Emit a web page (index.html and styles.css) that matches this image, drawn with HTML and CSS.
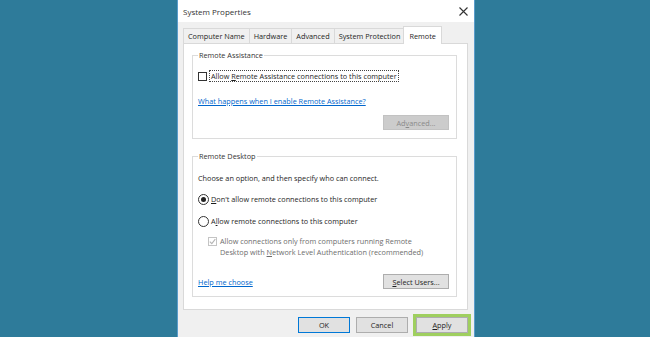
FILE: index.html
```html
<!DOCTYPE html>
<html>
<head>
    <title>System Properties</title>
    <link rel="stylesheet" href="styles.css">
</head>
<body>
    <div class="dialog">
        <div class="titlebar">
            <span class="title">System Properties</span>
            <svg class="close" width="9" height="9" viewBox="0 0 9 9">
                <path d="M0.5 0.5 L8.5 8.5 M8.5 0.5 L0.5 8.5" stroke="#333" stroke-width="1.1" fill="none"/>
            </svg>
        </div>

        <div class="content">
            <!-- Tab strip -->
            <div class="tabs">
                <div class="tab">Computer Name</div>
                <div class="tab">Hardware</div>
                <div class="tab">Advanced</div>
                <div class="tab">System Protection</div>
                <div class="tab active">Remote</div>
            </div>

            <div class="panel">
                <fieldset class="group group-assist">
                    <legend>Remote Assistance</legend>
                    <div class="check-row">
                        <span class="checkbox"></span>
                        <span class="focus">Allow <u>R</u>emote Assistance connections to this computer</span>
                    </div>
                    <a class="link link-assist" href="#">What happens when I enable Remote Assistance?</a>
                    <div class="btn-row">
                        <button class="btn disabled">Ad<u>v</u>anced...</button>
                    </div>
                </fieldset>

                <fieldset class="group group-desktop">
                    <legend>Remote Desktop</legend>
                    <p class="intro">Choose an option, and then specify who can connect.</p>
                    <div class="radio-row first">
                        <span class="radio checked"></span>
                        <span><u>D</u>on't allow remote connections to this computer</span>
                    </div>
                    <div class="radio-row">
                        <span class="radio"></span>
                        <span>A<u>l</u>low remote connections to this computer</span>
                    </div>
                    <div class="nla-row">
                        <span class="checkbox disabled">
                            <svg width="7" height="7" viewBox="0 0 7 7">
                                <path d="M0.8 3.6 L2.8 5.6 L6.3 1.2" stroke="#b5b5b5" stroke-width="1.1" fill="none"/>
                            </svg>
                        </span>
                        <span class="nla-text">Allow connections only from computers running Remote<br>Desktop with <u>N</u>etwork Level Authentication (recommended)</span>
                    </div>
                    <div class="bottom-row">
                        <a class="link" href="#">Help me choose</a>
                        <button class="btn"><u>S</u>elect Users...</button>
                    </div>
                </fieldset>
            </div>

            <div class="actions">
                <button class="btn default">OK</button>
                <button class="btn cancel">Cancel</button>
                <button class="btn apply"><u>A</u>pply</button>
            </div>
        </div>
    </div>
</body>
</html>
```

FILE: styles.css
```css
/* Reset */
* {
    margin: 0;
    padding: 0;
    box-sizing: border-box;
}

body {
    background-color: #2e7b9a;
    font-family: "Open Sans", sans-serif;
    font-size: 7.3px;
    color: #1e1e1e;
    height: 337px;
    overflow: hidden;
}

/* Window */
.dialog {
    width: 298px;
    height: 350px;
    margin-left: 177px;
    background-color: #f0f0f0;
    border-left: 1px solid #5a9ccb;
    border-right: 1px solid #5a9ccb;
}

.titlebar {
    height: 22px;
    background-color: #fff;
    display: flex;
    align-items: center;
    justify-content: space-between;
    padding: 0 6px 0 5px;
}

.title {
    font-size: 8px;
    color: #333;
}

.content {
    padding: 4px 6px 0 5px;
}

/* Tabs */
.tabs {
    display: flex;
    align-items: flex-end;
    height: 17px;
}

.tab {
    height: 15px;
    padding: 0 4px;
    display: flex;
    align-items: center;
    background-color: #f0f0f0;
    border: 1px solid #d9d9d9;
    border-bottom: none;
    margin-right: -1px;
}

.tab.active {
    height: 18px;
    background-color: #fff;
    margin-bottom: -1px;
    margin-left: -1px;
    position: relative;
    z-index: 1;
    padding: 0 5px;
}

/* Tab page */
.panel {
    height: 267px;
    background-color: #fff;
    border: 1px solid #d9d9d9;
    padding: 5px 10px 0 8px;
}

.group {
    border: 1px solid #dcdcdc;
    padding: 0 7px 0 5px;
}

.group legend {
    padding: 0 1px;
    line-height: 12px;
    color: #333;
}

.group-assist {
    padding-bottom: 8px;
}

.group-desktop {
    margin-top: 11px;
    padding-bottom: 7px;
}

.check-row {
    display: flex;
    align-items: center;
    height: 12px;
    margin-top: 9px;
}

.checkbox {
    width: 9px;
    height: 9px;
    border: 1px solid #333;
    background-color: #fff;
    margin-right: 2px;
    display: flex;
    align-items: center;
    justify-content: center;
}

.checkbox.disabled {
    border-color: #c4c4c4;
    margin-right: 3px;
}

.focus {
    border: 1px dotted #444;
    padding: 0 1px;
    line-height: 10px;
}

.link {
    color: #0066cc;
    text-decoration: underline;
}

.link-assist {
    display: block;
    line-height: 12px;
    margin-top: 13px;
}

.btn-row {
    display: flex;
    justify-content: flex-end;
    margin-top: 8px;
}

/* Buttons */
.btn {
    font-family: inherit;
    font-size: inherit;
    color: #1e1e1e;
    height: 15px;
    width: 66px;
    background-color: #e1e1e1;
    border: 1px solid #adadad;
}

.btn.disabled {
    background-color: #cccccc;
    border-color: #c2c2c2;
    color: #8a8a8a;
}

.intro {
    line-height: 12px;
    margin-top: 10px;
}

.radio-row {
    display: flex;
    align-items: center;
    height: 12px;
    margin-top: 10px;
}

.radio-row.first {
    margin-top: 9px;
}

.radio {
    width: 11px;
    height: 11px;
    border: 1px solid #333;
    border-radius: 50%;
    background-color: #fff;
    margin-right: 2px;
    display: flex;
    align-items: center;
    justify-content: center;
}

.radio.checked::after {
    content: "";
    width: 5px;
    height: 5px;
    border-radius: 50%;
    background-color: #222;
}

.nla-row {
    display: flex;
    align-items: flex-start;
    margin-top: 9px;
    padding-left: 10px;
}

.nla-row .checkbox {
    margin-top: 1px;
}

.nla-text {
    line-height: 11px;
    color: #6d6d6d;
}

.bottom-row {
    display: flex;
    align-items: center;
    justify-content: space-between;
    margin-top: 16px;
}

/* Dialog buttons */
.actions {
    display: flex;
    justify-content: flex-end;
    margin-top: 7px;
}

.actions .btn {
    width: 52px;
    height: 16px;
}

.btn.default {
    border-color: #0078d7;
}

.btn.cancel {
    margin-left: 6px;
}

.btn.apply {
    margin-left: 8px;
    outline: 3px solid #9fcf5f;
}
```
